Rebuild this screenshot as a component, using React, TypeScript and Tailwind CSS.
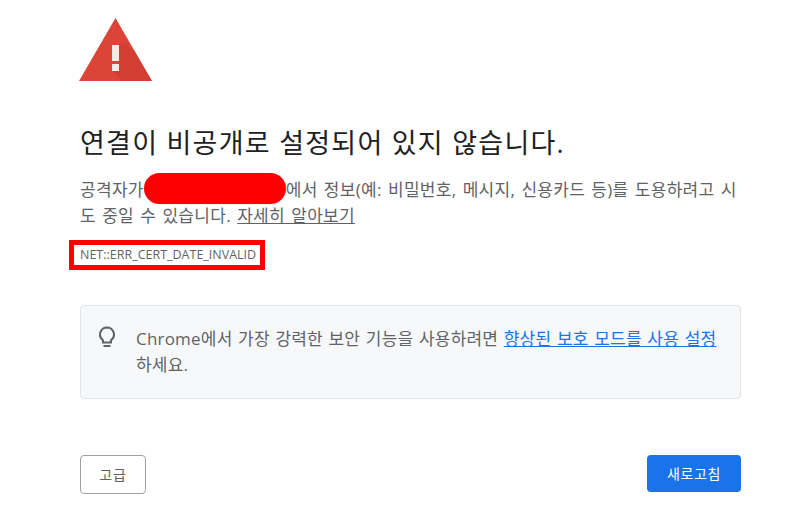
import React from 'react';

const FONT = { fontFamily: '"Open Sans", "Noto Sans CJK KR", sans-serif' };

const WarningIcon = () => (
  <svg width="73" height="63" viewBox="0 0 73 63" className="block">
    <path d="M36.5 0 L73 63 L0 63 Z" fill="#db4437" />
    <path d="M40 26 L40 44 L33 52 L44 63 L73 63 L55 32 L45 26 Z" fill="#c5392c" opacity="0.45" />
    <rect x="33" y="27" width="7" height="16" fill="#fbe9e7" />
    <rect x="33" y="46" width="7" height="7" fill="#fbe9e7" />
  </svg>
);

const BulbIcon = () => (
  <svg width="18" height="22" viewBox="0 0 18 22" fill="none" stroke="#5f6368" strokeWidth="2" className="block shrink-0">
    <path d="M9 1.5a7 7 0 0 0-4 12.7V16.5h8v-2.3A7 7 0 0 0 9 1.5Z" />
    <path d="M5.5 20h7" />
  </svg>
);

export default function App() {
  return (
    <div className="w-[800px] h-[508px] bg-white overflow-hidden pl-[80px] pr-[59px] pt-[18px] text-[#5f6368]" style={FONT}>
      <div className="-ml-px">
        <WarningIcon />
      </div>

      <h1 className="mt-[40px] text-[27px] leading-[44px] font-normal tracking-[1.25px] text-[#202124] whitespace-nowrap">
        연결이 비공개로 설정되어 있지 않습니다.
      </h1>

      <p className="mt-[12px] text-[17px] leading-[26px] tracking-[0.3px] [word-spacing:1.5px]">
        공격자가
        <span className="inline-block align-middle w-[142px] h-[31px] -my-3 -translate-y-[3px] rounded-full bg-[#ff0000]" />
        에서 정보(예: 비밀번호, 메시지, 신용카드 등)를 도용하려고 시도 중일 수 있습니다.{' '}
        <a className="underline">자세히 알아보기</a>
      </p>

      <div className="mt-[11px] -ml-[11px] w-[196px] h-[30px] border-[5px] border-[#ff0000] flex items-center pl-[6px] text-[12.5px] whitespace-nowrap">
        NET::ERR_CERT_DATE_INVALID
      </div>

      <div className="mt-[35px] h-[94px] rounded border border-[#e3e5e8] bg-[#f7f8fa] flex gap-[20px] pl-[17px] pr-[10px] pt-[20px]">
        <BulbIcon />
        <p className="text-[17px] leading-[26px] tracking-[0.2px] [word-spacing:1px]">
          Chrome에서 가장 강력한 보안 기능을 사용하려면{' '}
          <a className="text-[#1a73e8] underline">향상된 보호 모드를 사용 설정</a>
          하세요.
        </p>
      </div>

      <div className="mt-[56px] flex justify-between">
        <button className="w-[66px] h-[39px] rounded border border-[#9aa0a6] bg-white text-[14px] tracking-[0.8px] text-[#5f6368]">
          고급
        </button>
        <button className="w-[94px] h-[37px] rounded bg-[#1a73e8] text-[14px] tracking-[0.6px] text-white">
          새로고침
        </button>
      </div>
    </div>
  );
}
